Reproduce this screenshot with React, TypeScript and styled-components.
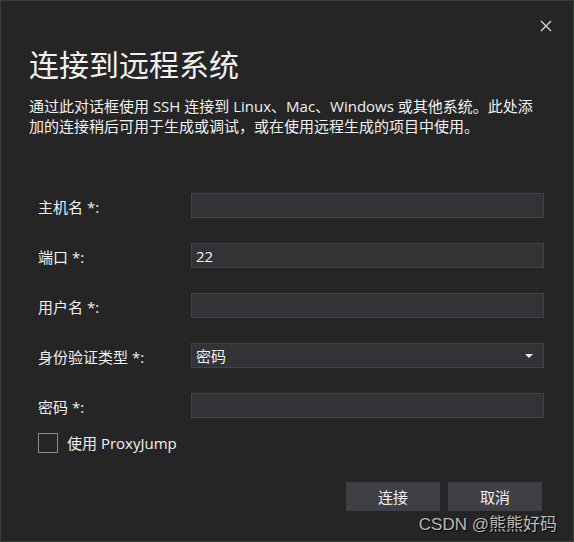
import styled, { createGlobalStyle } from "styled-components";

const GlobalStyle = createGlobalStyle`
    html, body {
        margin: 0;
        padding: 0;
        background: #252526;
    }
    * {
        box-sizing: border-box;
    }
`;

const FONT = `"Open Sans", "Noto Sans CJK SC", sans-serif`;

const Dialog = styled.div`
    position: relative;
    width: 574px;
    height: 542px;
    background: #252526;
    border: 1px solid #3c3c3c;
    color: #f1f1f1;
    font-family: ${FONT};
    font-size: 15px;
    padding: 43px 31px 0 28px;
`;

const CloseButton = styled.button`
    position: absolute;
    top: 17px;
    right: 19px;
    width: 16px;
    height: 16px;
    padding: 0;
    border: none;
    background: transparent;
    display: flex;
    align-items: center;
    justify-content: center;
    cursor: pointer;
`;

const Title = styled.h1`
    margin: 0;
    font-size: 30px;
    font-weight: 400;
    line-height: 42px;
    color: #f1f1f1;
`;

const Description = styled.p`
    margin: 10px 0 0;
    font-size: 15px;
    line-height: 20px;
    color: #f1f1f1;
    white-space: nowrap;
`;

const Form = styled.div`
    margin-top: 57px;
    padding-left: 9px;
    display: grid;
    grid-template-columns: 153px 353px;
    row-gap: 25px;
    align-items: center;
`;

const Label = styled.label`
    font-size: 15px;
    line-height: 20px;
    padding-top: 2px;
`;

const Field = styled.div<{ $select?: boolean }>`
    height: 25px;
    background: #333337;
    border: 1px solid #434346;
    display: flex;
    align-items: center;
    justify-content: space-between;
    padding: 0 10px 0 4px;
    font-size: 15px;
`;

const Caret = styled.span`
    width: 0;
    height: 0;
    border-left: 4px solid transparent;
    border-right: 4px solid transparent;
    border-top: 4px solid #f1f1f1;
`;

const CheckRow = styled.div`
    margin-top: 14px;
    padding-left: 9px;
    display: flex;
    align-items: center;
    gap: 9px;
    font-size: 15px;
`;

const CheckBox = styled.span`
    width: 20px;
    height: 20px;
    border: 1px solid #8a8a8a;
    background: #252526;
`;

const Actions = styled.div`
    margin-top: 29px;
    display: flex;
    justify-content: flex-end;
    gap: 8px;
`;

const Button = styled.button`
    width: 94px;
    height: 29px;
    background: #3f3f46;
    border: none;
    color: #f1f1f1;
    font-family: ${FONT};
    font-size: 15px;
    cursor: pointer;
`;

const Watermark = styled.span`
    position: absolute;
    right: 16px;
    bottom: 6px;
    font-size: 17px;
    color: #b9b9b9;
    text-shadow: 1px 1px 1px #000;
    font-family: "Liberation Sans", "Noto Sans CJK SC", sans-serif;
`;

const fields = [
    { label: "主机名 *:", value: "" },
    { label: "端口 *:", value: "22" },
    { label: "用户名 *:", value: "" },
    { label: "身份验证类型 *:", value: "密码", select: true },
    { label: "密码 *:", value: "" },
];

export default function App() {
    return (
        <>
            <GlobalStyle />
            <Dialog>
                <CloseButton aria-label="关闭">
                    <svg width="12" height="12" viewBox="0 0 12 12">
                        <path d="M1 1L11 11M11 1L1 11" stroke="#e0e0e0" strokeWidth="1.2" />
                    </svg>
                </CloseButton>
                <Title>连接到远程系统</Title>
                <Description>
                    通过此对话框使用 SSH 连接到 Linux、Mac、Windows 或其他系统。此处添
                    <br />
                    加的连接稍后可用于生成或调试，或在使用远程生成的项目中使用。
                </Description>
                <Form>
                    {fields.map((f) => (
                        <>
                            <Label key={f.label}>{f.label}</Label>
                            <Field key={f.label + "-f"} $select={f.select}>
                                <span>{f.value}</span>
                                {f.select && <Caret />}
                            </Field>
                        </>
                    ))}
                </Form>
                <CheckRow>
                    <CheckBox />
                    <span>使用 ProxyJump</span>
                </CheckRow>
                <Actions>
                    <Button>连接</Button>
                    <Button>取消</Button>
                </Actions>
                <Watermark>CSDN @熊熊好码</Watermark>
            </Dialog>
        </>
    );
}
